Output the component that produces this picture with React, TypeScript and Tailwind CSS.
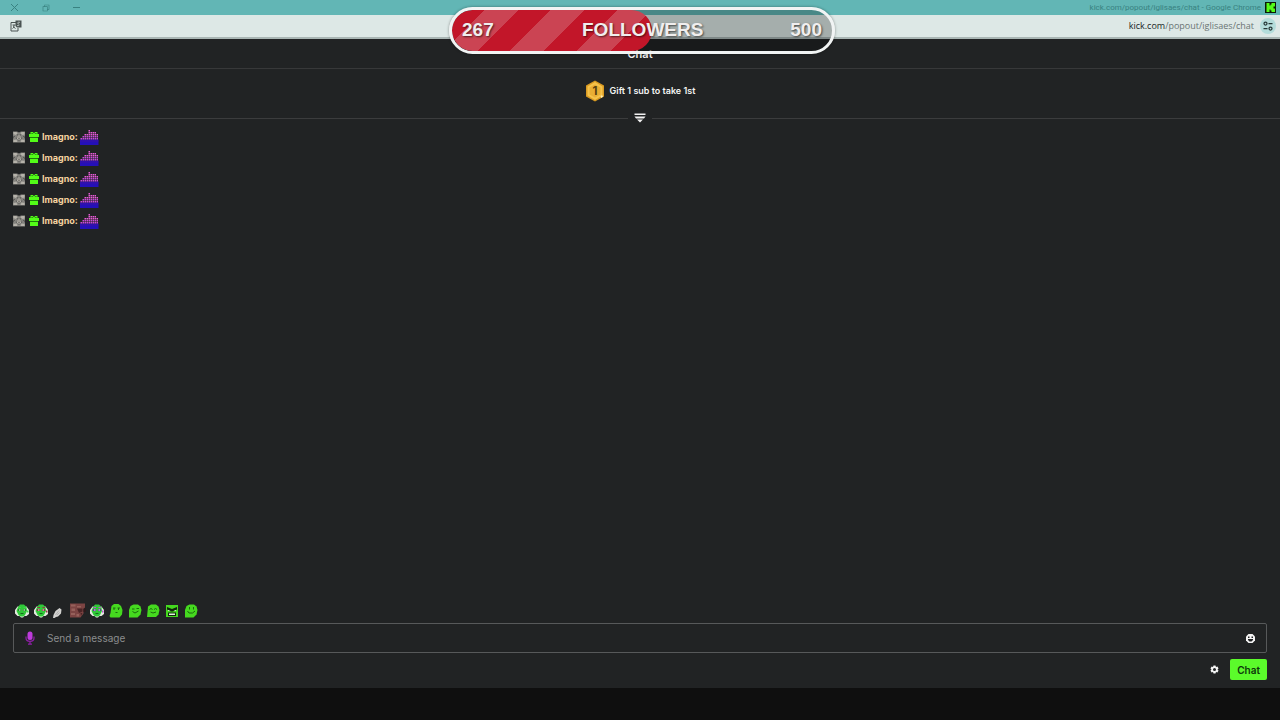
import { RiCheckboxMultipleBlankLine } from "react-icons/ri";

const messages = [
  { id: 1, user: "Imagno" },
  { id: 2, user: "Imagno" },
  { id: 3, user: "Imagno" },
  { id: 4, user: "Imagno" },
  { id: 5, user: "Imagno" },
];

// height of each column of the equalizer emote, in blocks
const bars = [1, 2, 3, 3, 5, 4, 4, 4, 3];

function KickLogo() {
  return (
    <svg viewBox="0 0 22 22" className="size-[11px]" aria-hidden="true">
      <rect width="22" height="22" fill="#0b1a08" />
      <path fill="#53fc18" d="M3 2h6v5h2V5h2V2h7v7h-3v4h3v7h-7v-3h-2v-2H9v5H3z" />
    </svg>
  );
}

function ModBadge() {
  return (
    <svg viewBox="0 0 24 24" className="size-3" aria-hidden="true">
      <path fill="#85847f" d="M0 1h8l4 2 4-2h8v8l-1 4 1 3v7H0v-7l1-3-1-4z" />
      <path fill="#b5b2aa" d="M1 2h6l2 3-4 3-4-2zM17 2h6v5l-4 1-4-3zM1 18l6-1 2 5H1zM17 17l6 1v4h-8z" />
      <path fill="#5c5b58" d="M8 6l4 2 4-2v5l3 3-4 3-3 3-3-3-4-3 3-3zM1 10h3v2H1zM20 10h3v2h-3z" />
      <circle cx="12" cy="13" r="4.5" fill="#bab7af" />
      <path fill="#45423e" d="M9 11h2v2H9zM13 11h2v2h-2zM10 15h4v1h-4z" />
    </svg>
  );
}

function GiftBadge() {
  return (
    <svg viewBox="0 0 20 20" className="size-[10px]" aria-hidden="true">
      <path fill="#53fc18" d="M3 0h5l2 3 2-3h5v4h3v6H0V4h3zM2 12h16v8H2z" />
      <path fill="#1c7c0b" d="M5 2h2l1 2H5zM13 2h2v2h-3zM2 10h16v2H2z" />
    </svg>
  );
}

function EqualizerEmote() {
  return (
    <svg viewBox="0 -2 38 34" className="h-[17px] w-[19px]" aria-hidden="true">
      <rect x="0" y="21" width="37" height="11" fill="#2410b8" />
      <rect x="0" y="23" width="37" height="2" fill="#3a11a4" />
      {bars.map((count, col) =>
        Array.from({ length: count }, (_, row) => (
          <rect
            key={`${col}-${row}`}
            x={col * 4 + 1}
            y={18 - row * 4}
            width="3"
            height="3"
            fill={row > 1 ? "#e65ad6" : "#c64bd8"}
          />
        ))
      )}
    </svg>
  );
}

function HeadsetFace({ accent, eyes }: { accent: string; eyes: string }) {
  return (
    <svg viewBox="0 0 28 28" className="size-[14px]" aria-hidden="true">
      <path fill="#e3eade" d="M5 5h18l5 7v8l-5 4h-4l-3 3h-4l-3-3H5l-5-5v-7z" />
      <path fill="#2fc838" d="M6 6l4-5h8l5 5 1 8-4 8-3 3h-6l-4-3-4-8z" />
      <path fill={accent} d="M7 6h5v2H7zM17 6h5v2h-5zM24 13h3v4h-3z" />
      <path fill={eyes} d="M6 10h6v4H6zM16 10h6v4h-6z" />
      <path fill="#eef5ea" d="M8 11h3v2H8zM17 11h3v2h-3z" />
      <path fill="#176c1c" d="M11 18h6v2h-6z" />
    </svg>
  );
}

function FeatherEmote() {
  return (
    <svg viewBox="0 0 28 28" className="size-[14px]" aria-hidden="true">
      <path fill="#d2d2d0" d="M13 8l4 3-1 8-6 6-4 1-3 2H0l1-6 4-8z" />
      <path stroke="#8c8c8e" strokeWidth="1" fill="none" d="M12 13l-7 9M13 17l-5 5" />
    </svg>
  );
}

function PhotoEmote() {
  return (
    <svg viewBox="0 0 32 28" className="h-[15px] w-4" aria-hidden="true">
      <path fill="#7c4443" d="M0 0h30v8l-3 3v9l-6 8H0z" />
      <path fill="#96605b" d="M2 2h9v4H2zM14 5h8v3h-8zM3 10h7v5H3zM2 19h8v4H2zM13 21h5v5h-5z" />
      <path fill="#4b2426" d="M14 10h11v6l-7 3zM21 19h4l-3 6z" />
      <path fill="#2c191b" d="M27 10h5v7h-5z" />
    </svg>
  );
}

const slimeBodies = {
  tall: "M5 4l5-4h9l5 4 3 8-1 9-5 6H3l-2-3 2-6z",
  drop: "M5 4l6-3h9l5 4 2 7-2 9-6 6H2V12z",
  wide: "M4 5l6-4h10l5 4 2 7-2 9-5 5H2z",
};

function Slime({ body, face }: { body: keyof typeof slimeBodies; face: string }) {
  return (
    <svg viewBox="0 0 28 28" className="size-[14px]" aria-hidden="true">
      <path fill="#45d91f" d={slimeBodies[body]} />
      <path fill="none" stroke="#1a6a0e" strokeWidth="2" d={face} />
    </svg>
  );
}

function AngryBlock() {
  return (
    <svg viewBox="0 0 28 28" className="size-[14px]" aria-hidden="true">
      <path fill="#45d91f" d="M2 2h24v24H2z" />
      <path fill="#10270b" d="M4 6l10 4 10-4v5l-8 4h-4l-8-4zM6 17h16v7H6z" />
      <path fill="#e5f4e0" d="M6 12l5 2H6zM22 12l-5 2h5zM8 19h12v3H8z" />
    </svg>
  );
}

const emotes = [
  { name: "Headset wink", icon: <HeadsetFace accent="#3fd548" eyes="#23852a" /> },
  { name: "Headset angry", icon: <HeadsetFace accent="#9b3046" eyes="#8a2f42" /> },
  { name: "Feather", icon: <FeatherEmote /> },
  { name: "Photo", icon: <PhotoEmote /> },
  { name: "Headset party", icon: <HeadsetFace accent="#c04bd2" eyes="#6a2b9c" /> },
  { name: "Slime stare", icon: <Slime body="tall" face="M8 8h5M17 8h5M10 8v4M19 8v4M13 17h4" /> },
  { name: "Slime love", icon: <Slime body="drop" face="M8 10h5M17 9h5M9 15l5 3 7-4" /> },
  { name: "Slime happy", icon: <Slime body="wide" face="M7 11l3-2 3 2M16 11l3-2 3 2M9 16l5 2 6-2" /> },
  { name: "Angry block", icon: <AngryBlock /> },
  { name: "Slime smile", icon: <Slime body="drop" face="M11 6v5M19 6v5M7 14l3 4h7l5-4" /> },
];

function BrowserChrome() {
  return (
    <header>
      <div className="flex h-[15px] items-center justify-between bg-[#62b6b5] pr-1 pl-[11px] text-[#398281]">
        <div className="flex items-center gap-6">
          <button aria-label="Close" className="flex size-[7px] items-center">
            <svg viewBox="0 0 7 7" className="size-[7px]" stroke="currentColor" fill="none">
              <path d="M0 0l7 7M7 0L0 7" />
            </svg>
          </button>
          <button aria-label="Restore" className="flex size-[7px] items-center">
            <RiCheckboxMultipleBlankLine className="size-2 shrink-0" />
          </button>
          <button aria-label="Minimize" className="flex size-[7px] items-center">
            <svg viewBox="0 0 7 7" className="size-[7px]" stroke="currentColor" fill="none">
              <path d="M0 3.5h7" />
            </svg>
          </button>
        </div>
        <div className="flex items-center gap-1">
          <span className="font-['Roboto',sans-serif] text-[8px] leading-none">
            kick.com/popout/iglisaes/chat - Google Chrome
          </span>
          <KickLogo />
        </div>
      </div>
      <div className="flex h-6 items-center justify-between border-b-2 border-[#a9b6b4] bg-[#dde8e6] pr-1 pl-[10px]">
        <button aria-label="Translate this page" className="text-[#4a5352]">
          <svg viewBox="0 0 24 24" className="size-3">
            <path fill="none" stroke="currentColor" strokeWidth="2" d="M12 5H2v17h14v-6M5 10h6M8 10c0 4-1 6-3 7M6 13l5 4" />
            <path fill="currentColor" d="M11 1h12v14h-9l-3-3z" />
            <path fill="none" stroke="#dde8e6" strokeWidth="1.5" d="M20 5c-4-2-6 1-3 3s1 4-3 3" />
          </svg>
        </button>
        <div className="flex items-center gap-[6px]">
          <span className="font-['Open_Sans',sans-serif] text-[9px] leading-[14px] text-[#6a7473]">
            <span className="text-[#202726]">kick.com</span>/popout/iglisaes/chat
          </span>
          <button aria-label="Site settings" className="flex size-4 items-center justify-center rounded-full bg-[#b3dcda] text-[#263938]">
            <svg viewBox="0 0 20 20" className="size-[10px]" fill="none" stroke="currentColor" strokeWidth="2.5">
              <circle cx="5" cy="5" r="3" />
              <path d="M11 5h8M1 15h8" />
              <circle cx="15" cy="15" r="3" />
            </svg>
          </button>
        </div>
      </div>
    </header>
  );
}

function FollowerGoal() {
  return (
    <div className="pointer-events-none absolute inset-x-0 top-[7px] flex justify-center pl-1">
      <div className="relative h-[47px] w-[386px] overflow-hidden rounded-full border-3 border-[#f1f4f4] bg-black/25 shadow-[0_0_3px_rgba(0,0,0,0.4)]">
        <div className="h-full w-[200px] rounded-full bg-[repeating-linear-gradient(135deg,#c21629_0px,#c21629_23px,#cb4453_23px,#cb4453_47px)]"></div>
        <div className="absolute inset-0 grid grid-cols-3 items-center px-[10px] font-['Liberation_Sans',sans-serif] text-[19px] font-bold text-[#f0eeee] [text-shadow:1px_1px_2px_rgba(0,0,0,0.6)]">
          <span>267</span>
          <span className="text-center">FOLLOWERS</span>
          <span className="text-right">500</span>
        </div>
      </div>
    </div>
  );
}

function GiftLeaderboard() {
  return (
    <section>
      <div className="flex h-[43px] items-center justify-center gap-[5px]">
        <svg viewBox="0 0 40 44" className="h-[22px] w-5" aria-hidden="true">
          <path fill="#d99a22" d="M20 1l18 10v22L20 43 2 33V11z" />
          <path fill="#f5c24a" d="M20 4l15 9v18l-15 9-15-9V13z" />
          <path fill="#e9ae34" d="M20 9l11 6v14l-11 6-11-6V15z" />
          <path fill="#fff0b8" d="M31 33l3-3 2 3-3 3z" />
          <text x="20" y="30" textAnchor="middle" className="font-['Inter',sans-serif] text-[23px] font-bold" fill="#57400f">1</text>
        </svg>
        <p className="text-[9px] leading-3 font-semibold text-[#f3f3f3]">Gift 1 sub to take 1st</p>
      </div>
      <div className="flex h-3 items-center">
        <div className="h-px flex-1 bg-[#3b3c3d]"></div>
        <button aria-label="Expand leaderboard" className="px-[6px]">
          <svg viewBox="0 0 24 24" className="size-3" fill="#f2f2f2">
            <path d="M1 3h22v3H1zM1 9h22l-3 4H4zM6 15h12l-6 6z" />
          </svg>
        </button>
        <div className="h-px flex-1 bg-[#3b3c3d]"></div>
      </div>
    </section>
  );
}

function MessageForm() {
  return (
    <form className="px-[13px] pb-2" onSubmit={(e) => e.preventDefault()}>
      <div className="flex h-[30px] items-center rounded-xs border border-[#57595a] px-[11px]">
        <svg viewBox="0 0 20 28" className="h-[14px] w-[10px]" aria-hidden="true">
          <rect x="5" y="1" width="10" height="17" rx="5" fill="#bd3bdc" />
          <path fill="none" stroke="#8f1fa8" strokeWidth="2.5" d="M2 11v3c0 9 16 9 16 0v-3M10 21v6M6 26h8" />
        </svg>
        <input
          type="text"
          aria-label="Send a message"
          placeholder="Send a message"
          className="ml-3 min-w-0 flex-1 bg-transparent text-[10px] leading-4 text-white outline-none placeholder:text-[#8b8d8e]"
        />
        <button type="button" aria-label="Emotes">
          <svg viewBox="0 0 18 18" className="size-[9px]">
            <path fill="#f4f4f4" d="M5 0h8l5 5v8l-5 5H5l-5-5V5z" />
            <path fill="#212324" d="M4 5h3v3H4zM11 5h3v3h-3zM4 10h10v2l-3 3H7l-3-3z" />
          </svg>
        </button>
      </div>
      <div className="mt-[6px] flex items-center justify-end gap-[11px]">
        <button type="button" aria-label="Chat settings">
          <svg viewBox="0 0 18 18" className="size-[9px]" fill="#f4f4f4" fillRule="evenodd">
            <path d="M7 1h4l1 3 3-1 2 4-2 2 2 2-2 4-3-1-1 3H7l-1-3-3 1-2-4 2-2-2-2 2-4 3 1zM9 6a3 3 0 1 0 0 6 3 3 0 0 0 0-6z" />
          </svg>
        </button>
        <button type="submit" className="h-[21px] rounded-xs bg-[#5bfb2b] px-[7px] text-[10px] leading-3 font-semibold text-[#0c380a]">
          Chat
        </button>
      </div>
    </form>
  );
}

export default function App() {
  return (
    <div className="relative flex min-h-screen flex-col bg-[#212324] font-['Inter',sans-serif]">
      <BrowserChrome />
      <main className="flex flex-1 flex-col">
        <div className="flex h-[30px] items-center justify-center border-b border-[#373839]">
          <h1 className="text-[11px] leading-4 font-semibold text-[#f3f3f3]">Chat</h1>
        </div>
        <GiftLeaderboard />
        <ul className="flex-1 px-[13px] pt-[2px]">
          {messages.map((message) => (
            <li key={message.id} className="flex h-[21px] items-center gap-1">
              <ModBadge />
              <div className="flex items-center gap-[3px]">
                <GiftBadge />
                <span className="text-[9px] leading-3 font-bold text-[#f5d3a0]">{message.user}:</span>
              </div>
              <div className="-ml-[2px]">
                <EqualizerEmote />
              </div>
            </li>
          ))}
        </ul>
        <div className="mb-[5px] ml-[15px] flex w-[183px] items-center justify-between">
          {emotes.map((emote) => (
            <button key={emote.name} aria-label={emote.name} className="flex h-[15px] w-[14px] items-center justify-center">
              <span className="shrink-0">{emote.icon}</span>
            </button>
          ))}
        </div>
        <MessageForm />
      </main>
      <footer className="h-8 bg-[#0f0f0f]"></footer>
      <FollowerGoal />
    </div>
  );
}
